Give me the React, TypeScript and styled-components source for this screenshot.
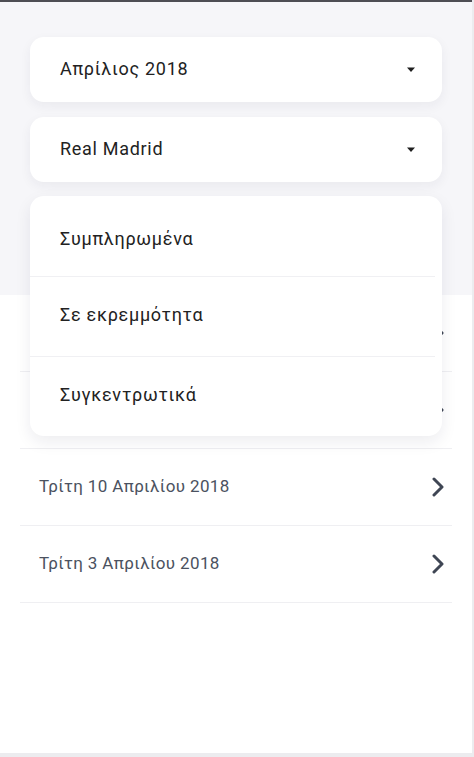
import * as React from "react";
import styled, { createGlobalStyle } from "styled-components";

const GlobalStyle = createGlobalStyle`
  html, body {
    margin: 0;
    padding: 0;
    background: #ececef;
  }
  body {
    font-family: Roboto, "Noto Sans", sans-serif;
  }
`;

const months = ["Απρίλιος 2018", "Real Madrid"];
const options = ["Συμπληρωμένα", "Σε εκρεμμότητα", "Συγκεντρωτικά"];
const dates = [
  "Τρίτη 24 Απριλίου 2018",
  "Τρίτη 17 Απριλίου 2018",
  "Τρίτη 10 Απριλίου 2018",
  "Τρίτη 3 Απριλίου 2018",
];

function Caret() {
  return (
    <svg width="10" height="6" viewBox="0 0 10 6">
      <path d="M1 0.5h8L5 5z" fill="#1f1f1f" />
    </svg>
  );
}

function Chevron() {
  return (
    <svg width="14" height="20" viewBox="0 0 14 20">
      <polyline
        points="3,2 11,10 3,18"
        fill="none"
        stroke="#3f4654"
        strokeWidth="3"
        strokeLinecap="round"
        strokeLinejoin="round"
      />
    </svg>
  );
}

export default function App() {
  return (
    <>
      <GlobalStyle />
      <Screen>
        <Page>
          <Header>
            {months.map((m) => (
              <SelectCard key={m}>
                <SelectLabel>{m}</SelectLabel>
                <Caret />
              </SelectCard>
            ))}
          </Header>
          <List>
            {dates.map((d) => (
              <Row key={d}>
                <RowLabel>{d}</RowLabel>
                <Chevron />
              </Row>
            ))}
          </List>
          <Menu>
            {options.map((o) => (
              <MenuItem key={o}>{o}</MenuItem>
            ))}
          </Menu>
        </Page>
      </Screen>
    </>
  );
}

const Screen = styled.div`
  width: 474px;
  height: 757px;
  overflow: hidden;
  background: #ececef;
`;

const Page = styled.div`
  position: relative;
  width: 472px;
  height: 751px;
  background: #fff;
  border-top: 2px solid #4e4e54;
`;

const Header = styled.div`
  display: flex;
  flex-direction: column;
  gap: 15px;
  height: 293px;
  box-sizing: border-box;
  padding: 35px 30px 0;
  background: #f6f6f9;
`;

const SelectCard = styled.div`
  display: flex;
  align-items: center;
  justify-content: space-between;
  height: 65px;
  box-sizing: border-box;
  padding: 0 26px 0 30px;
  border-radius: 14px;
  background: #fff;
  box-shadow: 0 4px 12px rgba(30, 30, 60, 0.06);
`;

const SelectLabel = styled.span`
  font-size: 18px;
  color: #222;
  letter-spacing: 0.7px;
  margin-top: -2px;
`;

const List = styled.div`
  display: flex;
  flex-direction: column;
  margin: 0 20px;
`;

const Row = styled.div`
  display: flex;
  align-items: center;
  justify-content: space-between;
  height: 77px;
  box-sizing: border-box;
  padding: 0 7px 0 19px;
  border-bottom: 1px solid #efeff2;
`;

const RowLabel = styled.span`
  font-size: 17px;
  color: #4b5260;
  letter-spacing: 0.35px;
  margin-top: -2px;
`;

const Menu = styled.div`
  position: absolute;
  top: 194px;
  left: 30px;
  width: 412px;
  display: flex;
  flex-direction: column;
  border-radius: 14px;
  background: #fff;
  box-shadow: 0 6px 16px rgba(30, 30, 60, 0.08);
  overflow: hidden;
`;

const MenuItem = styled.div`
  display: flex;
  align-items: center;
  height: 80px;
  box-sizing: border-box;
  padding: 4px 0 0 30px;
  margin-right: 7px;
  font-size: 18px;
  color: #222;
  letter-spacing: 0.7px;
  & + & {
    padding: 0 0 4px 30px;
    border-top: 1px solid #f0f0f3;
  }
`;
